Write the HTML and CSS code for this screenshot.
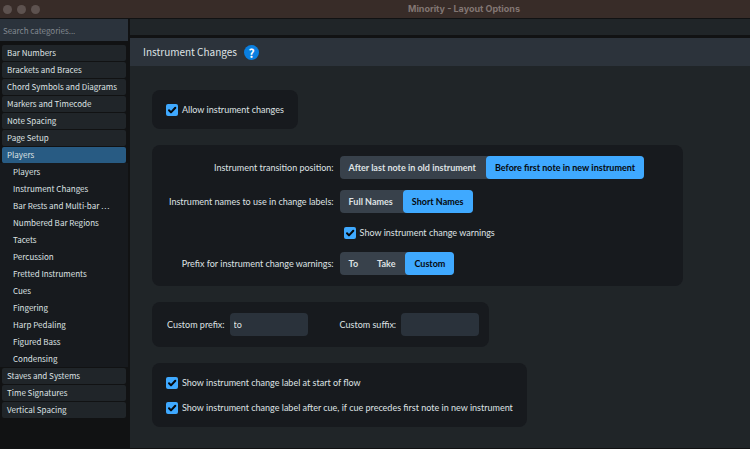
FILE: index.html
```html
<!DOCTYPE html>
<html lang="en">
<head>
<meta charset="utf-8">
<title>Minority - Layout Options</title>
<link rel="stylesheet" href="styles.css">
</head>
<body>
<div class="window">
  <header class="titlebar">
    <div class="lights"><span class="light"></span><span class="light"></span><span class="light"></span></div>
    <h1 class="title">Minority - Layout Options</h1>
  </header>
  <div class="body">
    <aside class="sidebar">
      <input class="search" type="search" placeholder="Search categories..." aria-label="Search categories">
      <nav>
        <ul class="categories">
          <li><a class="category" href="#">Bar Numbers</a></li>
          <li><a class="category" href="#">Brackets and Braces</a></li>
          <li><a class="category" href="#">Chord Symbols and Diagrams</a></li>
          <li><a class="category" href="#">Markers and Timecode</a></li>
          <li><a class="category" href="#">Note Spacing</a></li>
          <li><a class="category" href="#">Page Setup</a></li>
          <li>
            <a class="category selected" href="#">Players</a>
            <ul class="sections">
              <li><a class="section" href="#">Players</a></li>
              <li><a class="section" href="#">Instrument Changes</a></li>
              <li><a class="section" href="#">Bar Rests and Multi-bar …</a></li>
              <li><a class="section" href="#">Numbered Bar Regions</a></li>
              <li><a class="section" href="#">Tacets</a></li>
              <li><a class="section" href="#">Percussion</a></li>
              <li><a class="section" href="#">Fretted Instruments</a></li>
              <li><a class="section" href="#">Cues</a></li>
              <li><a class="section" href="#">Fingering</a></li>
              <li><a class="section" href="#">Harp Pedaling</a></li>
              <li><a class="section" href="#">Figured Bass</a></li>
              <li><a class="section" href="#">Condensing</a></li>
            </ul>
          </li>
          <li><a class="category" href="#">Staves and Systems</a></li>
          <li><a class="category" href="#">Time Signatures</a></li>
          <li><a class="category" href="#">Vertical Spacing</a></li>
        </ul>
      </nav>
    </aside>
    <main class="main">
      <div class="strip"></div>
      <div class="heading">
        <h2 class="heading-text">Instrument Changes</h2>
        <button class="help" type="button" aria-label="Help">?</button>
      </div>
      <form class="content">
        <section class="panel checks">
          <label class="check"><span class="box"><input type="checkbox" checked><svg viewBox="0 0 12 12"><path d="M3 6.3 5 8.4 9.3 3.7"/></svg></span>Allow instrument changes</label>
        </section>
        <section class="panel settings">
          <span class="label" id="position">Instrument transition position:</span>
          <div class="segments" role="group" aria-labelledby="position">
            <button class="segment wide" type="button">After last note in old instrument</button><button class="segment active" type="button">Before first note in new instrument</button>
          </div>
          <span class="label" id="names">Instrument names to use in change labels:</span>
          <div class="segments" role="group" aria-labelledby="names">
            <button class="segment wide" type="button">Full Names</button><button class="segment active" type="button">Short Names</button>
          </div>
          <label class="check nested"><span class="box"><input type="checkbox" checked><svg viewBox="0 0 12 12"><path d="M3 6.3 5 8.4 9.3 3.7"/></svg></span>Show instrument change warnings</label>
          <span class="label" id="prefix-kind">Prefix for instrument change warnings:</span>
          <div class="segments" role="group" aria-labelledby="prefix-kind">
            <button class="segment wide" type="button">To</button><button class="segment wide" type="button">Take</button><button class="segment active" type="button">Custom</button>
          </div>
        </section>
        <section class="panel affixes">
          <div class="field"><label for="prefix">Custom prefix:</label><input class="text" id="prefix" type="text" value="to"></div>
          <div class="field"><label for="suffix">Custom suffix:</label><input class="text" id="suffix" type="text"></div>
        </section>
        <section class="panel checks">
          <label class="check"><span class="box"><input type="checkbox" checked><svg viewBox="0 0 12 12"><path d="M3 6.3 5 8.4 9.3 3.7"/></svg></span>Show instrument change label at start of flow</label>
          <label class="check"><span class="box"><input type="checkbox" checked><svg viewBox="0 0 12 12"><path d="M3 6.3 5 8.4 9.3 3.7"/></svg></span>Show instrument change label after cue, if cue precedes first note in new instrument</label>
        </section>
      </form>
    </main>
  </div>
</div>
</body>
</html>
```
FILE: styles.css
```css
* { box-sizing: border-box; }

body {
  margin: 0;
  background: #111213;
  color: #dfe2e4;
  font: 9px/16px Lato, sans-serif;
}

button, input { font: inherit; color: inherit; border: 0; }
a { color: inherit; text-decoration: none; }
ul { list-style: none; margin: 0; padding: 0; }

.window { min-height: 100vh; display: flex; flex-direction: column; }

.titlebar {
  display: grid;
  grid-template-columns: 178px 1fr;
  align-items: center;
  height: 18px;
  background: #382c28;
}
.lights { display: flex; gap: 5px; padding-left: 3px; }
.light { width: 9px; height: 9px; border-radius: 50%; background: #5d524f; }
.title {
  margin: 0;
  text-align: center;
  font: bold 9px/16px Inter, sans-serif;
  color: #827673;
}

.body { flex: 1; display: flex; padding: 1px 0; }

.sidebar {
  flex: none;
  width: 130px;
  padding-right: 1px;
  font: 8px/16px "Noto Sans CJK SC", "Noto Sans", sans-serif;
}
.search {
  display: block;
  width: 128px;
  height: 22px;
  padding: 0 3px;
  background: #2b333c;
}
.search::placeholder { color: #828990; opacity: 1; }

.categories { padding-top: 4px; white-space: nowrap; }
.category {
  display: block;
  margin: 0 3px 1px 2px;
  padding: 0 5px;
  border-radius: 2px;
  background: #202529;
}
.selected { background: #285b83; margin-bottom: 0; }
.sections { background: #171a1e; margin: 0 1px 1px 0; }
.section { display: block; padding-left: 13px; line-height: 17px; }

.main { flex: 1; display: flex; flex-direction: column; background: #202528; }
.strip { height: 19px; border-bottom: 3px solid #111213; }
.heading {
  display: flex;
  align-items: center;
  gap: 7px;
  height: 28px;
  padding-left: 13px;
  background: #2c333b;
  font: 10px/16px "Noto Sans CJK SC", "Noto Sans", sans-serif;
}
.heading-text { margin: 0; font: inherit; }
.help {
  width: 15px;
  height: 15px;
  padding: 0;
  border-radius: 50%;
  background: #0a7fe0;
  color: #fff;
  font-size: 12px;
  font-weight: bold;
  line-height: 15px;
}

.content {
  display: flex;
  flex-direction: column;
  align-items: flex-start;
  gap: 16px;
  padding: 24px 22px 20px;
}
.panel { border-radius: 8px; background: #171a1e; }

.checks { display: flex; flex-direction: column; gap: 8px; padding: 11px 14px; }
.check { display: flex; align-items: center; gap: 4px; line-height: 17px; }
.box { display: grid; width: 12px; height: 12px; }
.box input {
  grid-area: 1 / 1;
  appearance: none;
  width: 12px;
  height: 12px;
  margin: 0;
  border-radius: 2px;
  background: #3fa9ff;
}
.box svg {
  grid-area: 1 / 1;
  z-index: 1;
  pointer-events: none;
  fill: none;
  stroke: #05080b;
  stroke-width: 2;
  stroke-linecap: round;
  stroke-linejoin: round;
}

.settings {
  display: grid;
  grid-template-columns: auto auto;
  align-items: center;
  gap: 11px 6px;
  padding: 11px 39px 11px 17px;
}
.label { text-align: right; }
.nested { grid-column: 2; padding-left: 4px; }
.segments { justify-self: start; display: flex; border-radius: 4px; background: #38414b; }
.segment {
  height: 23px;
  padding: 0 9px;
  border-radius: 4px;
  background: transparent;
  font-weight: bold;
}
.wide { padding-right: 10px; }
.active { background: #3fa9ff; color: #05080b; }

.affixes { display: flex; gap: 32px; padding: 11px 10px 11px 15px; }
.field { display: flex; align-items: center; gap: 5px; }
.text { width: 78px; height: 23px; padding: 0 4px; border-radius: 4px; background: #2a323b; }
```
